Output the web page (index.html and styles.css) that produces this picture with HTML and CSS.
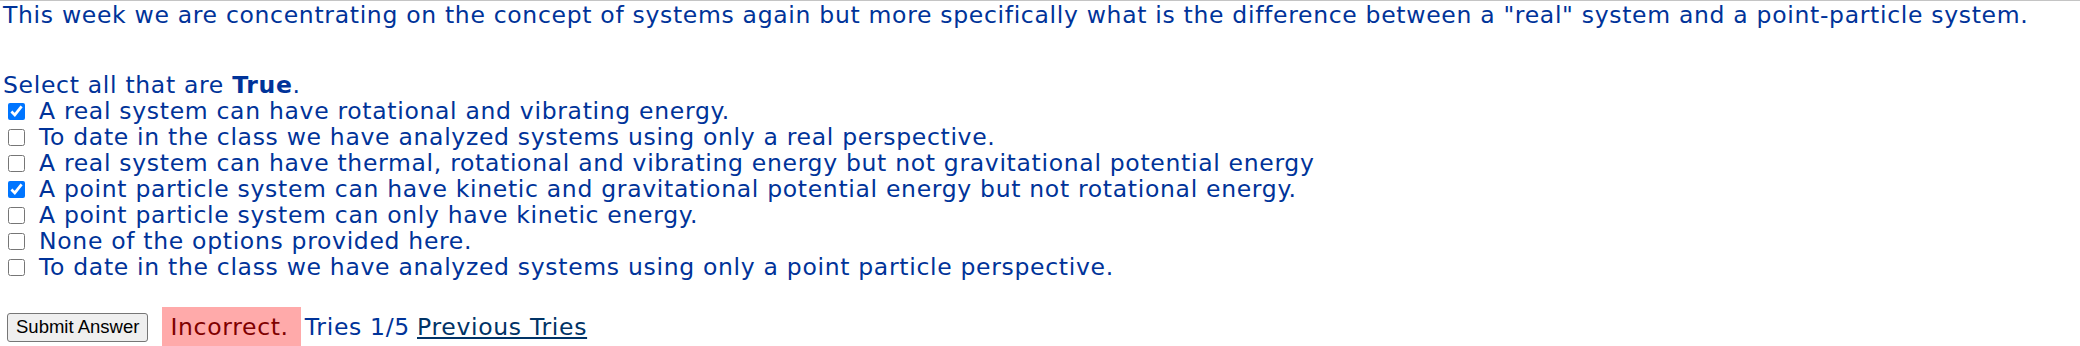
FILE: index.html
```html
<!DOCTYPE html>
<html>
<head>
<meta charset="utf-8">
<link rel="stylesheet" href="styles.css">
</head>
<body>
<div class="page">
  <p class="intro">This week we are concentrating on the concept of systems again but more specifically what is the difference between a "real" system and a point-particle system.</p>
  <p class="prompt">Select all that are <b>True</b>.</p>
  <div class="options">
    <label class="opt"><input type="checkbox" checked><span>A real system can have rotational and vibrating energy.</span></label>
    <label class="opt"><input type="checkbox"><span>To date in the class we have analyzed systems using only a real perspective.</span></label>
    <label class="opt"><input type="checkbox"><span>A real system can have thermal, rotational and vibrating energy but not gravitational potential energy</span></label>
    <label class="opt"><input type="checkbox" checked><span>A point particle system can have kinetic and gravitational potential energy but not rotational energy.</span></label>
    <label class="opt"><input type="checkbox"><span>A point particle system can only have kinetic energy.</span></label>
    <label class="opt"><input type="checkbox"><span>None of the options provided here.</span></label>
    <label class="opt"><input type="checkbox"><span>To date in the class we have analyzed systems using only a point particle perspective.</span></label>
  </div>
  <div class="actions">
    <button class="submit" type="button">Submit Answer</button>
    <span class="result">Incorrect.</span>
    <span class="tries">Tries 1/5</span>
    <a class="prev" href="#">Previous Tries</a>
  </div>
</div>
</body>
</html>
```

FILE: styles.css
```css
html, body {
  margin: 0;
  padding: 0;
  background: #ffffff;
}
body {
  border-top: 1px solid #c4c4c4;
  overflow: hidden;
}
.page {
  padding-left: 3px;
  font-family: "DejaVu Sans", Verdana, sans-serif;
  font-size: 23.5px;
  letter-spacing: 0.68px;
  line-height: 26px;
  color: #003399;
}
.intro {
  margin: 1px 0 0 0;
  white-space: nowrap;
}
.prompt {
  margin: 44px 0 0 0;
}
.prompt b {
  font-weight: bold;
}
.options {
  display: flex;
  flex-direction: column;
}
.opt {
  display: flex;
  align-items: center;
  height: 26px;
  white-space: nowrap;
}
.opt input {
  width: 17px;
  height: 17px;
  margin: 0 14px 0 5px;
  flex: none;
}
.actions {
  display: flex;
  align-items: center;
  margin-top: 27px;
}
.submit {
  font-family: "Liberation Sans", Arial, sans-serif;
  font-size: 18.5px;
  letter-spacing: 0;
  height: 29px;
  padding: 0 8px;
  margin: 0 14px 0 4px;
  color: #000;
  background: #efefef;
  border: 1px solid #767676;
  border-radius: 3px;
}
.result {
  background: #ffaaaa;
  color: #800000;
  padding: 7px 12px 7px 8px;
  margin-right: 4px;
}
.tries {
  margin-right: 7px;
}
.prev {
  color: #003366;
  text-decoration: underline;
}
```
